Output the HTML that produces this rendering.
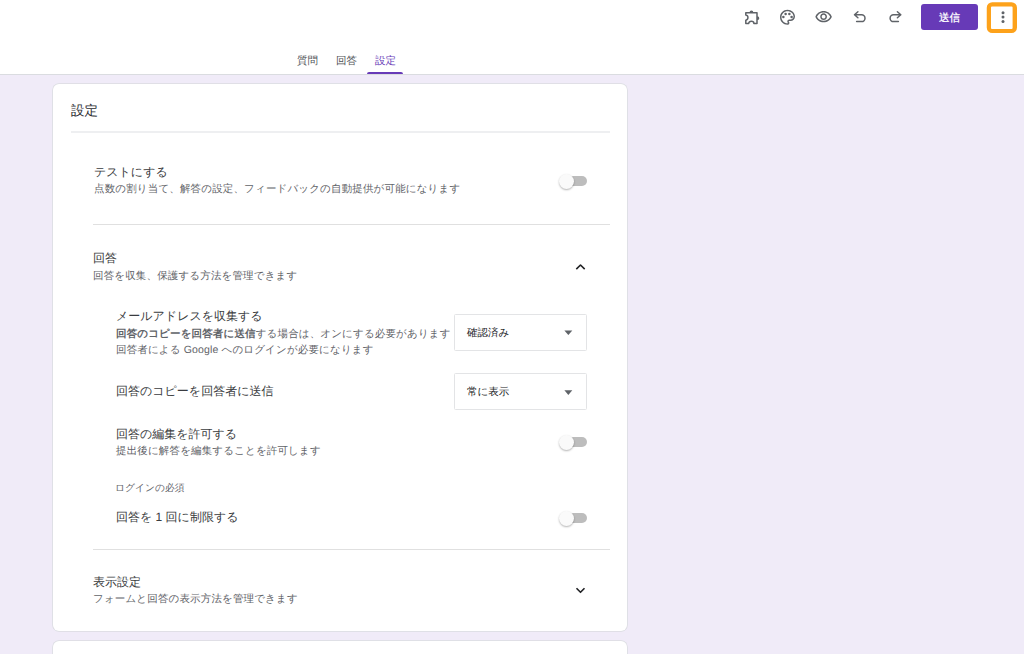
<!DOCTYPE html>
<html lang="ja">
<head>
<meta charset="utf-8">
<style>
*{box-sizing:border-box;margin:0;padding:0}
html,body{width:1024px;height:654px;overflow:hidden}
body{background:#f0ebf8;font-family:"Liberation Sans",sans-serif;color:#202124;position:relative;text-rendering:geometricPrecision}
.top{position:absolute;left:0;top:0;width:1024px;height:75px;background:#fff;border-bottom:1px solid #dadce0}
.send{position:absolute;left:921px;top:4px;width:57px;height:26.4px;background:#673ab7;border-radius:3px;color:#fff;font-size:10.5px;text-align:center;line-height:28px;-webkit-text-stroke:0.3px #fff}
.tab{position:absolute;top:55px;font-size:10.5px;color:#4f5257;line-height:12px}
.tab.on{color:#673ab7}
.uline{position:absolute;left:367px;top:72px;width:36px;height:2px;background:#673ab7;border-radius:2px 2px 0 0}
.card{position:absolute;left:52.5px;top:84px;width:574.2px;height:547px;background:#fff;border-radius:6px;box-shadow:0 0 0 0.75px #dadce0}
.card2{position:absolute;left:52.5px;top:641px;width:574.2px;height:60px;background:#fff;border-radius:6px;box-shadow:0 0 0 0.75px #dadce0}
.t{position:absolute;white-space:nowrap;line-height:1}
.h1{font-size:13.5px;color:#2b2c30}
.h2{font-size:12px;color:#3a3c40}
.sub{font-size:10.5px;letter-spacing:0.15px;color:#5f6368}
.sm{font-size:9.75px;color:#5f6368}
.hr{position:absolute;height:1px;background:#e0e0e0}
.sw{position:absolute;width:28px;height:16px}
.sw .track{position:absolute;left:1px;top:2.5px;width:27px;height:10.25px;border-radius:6px;background:#bdbdbd}
.sw .knob{position:absolute;left:0.4px;top:0.6px;width:15px;height:15px;border-radius:50%;background:#fafafa;box-shadow:0 1px 2px rgba(0,0,0,.3)}
.dd{position:absolute;left:454px;width:133px;height:36.5px;border:1px solid #e3e4e6;border-radius:1.5px;background:#fff}
.dd .lbl{position:absolute;left:12px;font-size:10.5px;color:#202124;line-height:1}
svg.ov{position:absolute;left:0;top:0}
</style>
</head>
<body>
<div class="top"></div>
<div class="tab" style="left:297px">質問</div>
<div class="tab" style="left:336px">回答</div>
<div class="tab on" style="left:375px">設定</div>
<div class="uline"></div>
<div class="send">送信</div>

<div class="card"></div>
<div class="card2"></div>

<div class="t h1" style="left:71px;top:104px">設定</div>
<div class="hr" style="left:71px;top:131px;width:539px;height:2px;background:#eeeff1"></div>

<div class="t h2" style="left:94px;top:166px">テストにする</div>
<div class="t sub" style="left:94px;top:184px">点数の割り当て、解答の設定、フィードバックの自動提供が可能になります</div>
<div class="sw" style="left:559px;top:173px"><div class="track"></div><div class="knob"></div></div>
<div class="hr" style="left:93px;top:224px;width:517px"></div>

<div class="t h2" style="left:93px;top:252px">回答</div>
<div class="t sub" style="left:93px;top:271px">回答を収集、保護する方法を管理できます</div>

<div class="t h2" style="left:116px;top:310px">メールアドレスを収集する</div>
<div class="t sub" style="left:116px;top:329px"><b>回答のコピーを回答者に送信</b>する場合は、オンにする必要があります</div>
<div class="t sub" style="left:116px;top:345px">回答者による Google へのログインが必要になります</div>
<div class="dd" style="top:314px"><div class="lbl" style="top:13px">確認済み</div></div>

<div class="t h2" style="left:116px;top:385px">回答のコピーを回答者に送信</div>
<div class="dd" style="top:373.4px"><div class="lbl" style="top:13px">常に表示</div></div>

<div class="t h2" style="left:116px;top:428px">回答の編集を許可する</div>
<div class="t sub" style="left:116px;top:446px">提出後に解答を編集することを許可します</div>
<div class="sw" style="left:559px;top:434.5px"><div class="track"></div><div class="knob"></div></div>

<div class="t sm" style="left:115px;top:484px">ログインの必須</div>
<div class="t h2" style="left:116px;top:511px">回答を 1 回に制限する</div>
<div class="sw" style="left:559px;top:510.5px"><div class="track"></div><div class="knob"></div></div>
<div class="hr" style="left:93px;top:549px;width:517px"></div>

<div class="t h2" style="left:93px;top:576px">表示設定</div>
<div class="t sub" style="left:93px;top:594px">フォームと回答の表示方法を管理できます</div>

<svg class="ov" width="1024" height="654" viewBox="0 0 1024 654" fill="none" stroke="#5f6368" stroke-width="1.5" stroke-linecap="round" stroke-linejoin="round">
  <!-- puzzle -->
  <path d="M745.8 12.65 H757 V23.4 H753.9 A2.6 2.1 0 0 0 748.7 23.4 H745.8 V20.2 A2.65 2.65 0 0 0 745.8 15 Z"/>
  <path d="M749.5 12.65 A1.95 2.2 0 0 1 753.4 12.65 Z M757 16.2 A2.3 1.95 0 0 1 757 20.1 Z" fill="#5f6368" stroke="none"/>
  <!-- palette -->
  <g transform="translate(778.5,8.3) scale(0.75)" fill="#5f6368" stroke="none">
    <path d="M12 22C6.49 22 2 17.51 2 12S6.49 2 12 2s10 4.04 10 9c0 3.31-2.69 6-6 6h-1.77c-.28 0-.5.22-.5.5 0 .12.05.23.13.33.41.47.64 1.06.64 1.67 0 1.38-1.12 2.5-2.5 2.5zm0-18c-4.41 0-8 3.59-8 8s3.59 8 8 8c.28 0 .5-.22.5-.5 0-.16-.08-.28-.14-.35-.41-.46-.63-1.050-.63-1.65 0-1.38 1.12-2.5 2.5-2.5H16c2.21 0 4-1.79 4-4 0-3.86-3.59-7-8-7z"/>
    <circle cx="6.5" cy="11.5" r="1.7"/><circle cx="9.5" cy="7.5" r="1.7"/><circle cx="14.5" cy="7.5" r="1.7"/><circle cx="17.5" cy="11.5" r="1.7"/>
  </g>
  <!-- eye -->
  <g transform="translate(814.6,8) scale(0.75)" fill="#5f6368" stroke="none">
    <path d="M12 6c3.79 0 7.17 2.130 8.82 5.5C19.17 14.87 15.79 17 12 17s-7.17-2.13-8.82-5.5C4.83 8.13 8.21 6 12 6m0-2C7 4 2.73 7.11 1 11.5 2.73 15.89 7 19 12 19s9.27-3.11 11-7.5C21.27 7.11 17 4 12 4zm0 5c1.38 0 2.5 1.12 2.5 2.5S13.38 14 12 14s-2.5-1.12-2.5-2.5S10.62 9 12 9m0-2c-2.48 0-4.5 2.02-4.5 4.5S9.52 16 12 16s4.5-2.02 4.5-4.5S14.48 7 12 7z"/>
  </g>
  <!-- undo -->
  <path d="M857.9 11.8 L854.5 14.8 L857.9 17.7 M854.8 14.8 H861.6 A3.4 3.4 0 0 1 861.6 21.6 H856.6"/>
  <!-- redo -->
  <path d="M897.4 11.8 L900.8 14.8 L897.4 17.7 M900.5 14.8 H893.5 A3.4 3.4 0 0 0 893.5 21.6 H898.4"/>
  <!-- highlight box -->
  <path fill-rule="evenodd" fill="#fda21b" stroke="none" d="M992.25 2.2 H1011.5 A5.5 5.5 0 0 1 1017 7.7 V27.5 A5.5 5.5 0 0 1 1011.5 33 H992.25 A5.5 5.5 0 0 1 986.75 27.5 V7.7 A5.5 5.5 0 0 1 992.25 2.2 Z M992 6.6 H1011.6 A1 1 0 0 1 1012.6 7.6 V27.9 A1 1 0 0 1 1011.6 28.9 H992 A1 1 0 0 1 991 27.9 V7.6 A1 1 0 0 1 992 6.6 Z"/>
  <!-- more vert -->
  <g fill="#5f6368" stroke="none">
    <circle cx="1003" cy="12.7" r="1.5"/><circle cx="1003" cy="17.1" r="1.5"/><circle cx="1003" cy="21.5" r="1.5"/>
  </g>
  <polygon points="564.4,330.5 572.3,330.5 568.35,335.1" fill="#5f6368" stroke="none"/>
  <polygon points="564.4,390.3 572.3,390.3 568.35,394.9" fill="#5f6368" stroke="none"/>
  <!-- chevrons -->
  <path d="M576.3 269.1 L580.5 265 L584.7 269.1" stroke="#202124" stroke-width="1.6" stroke-linecap="butt"/>
  <path d="M576.5 588.3 L580.5 592.3 L584.5 588.3" stroke="#202124" stroke-width="1.6" stroke-linecap="butt"/>
</svg>
</body>
</html>
